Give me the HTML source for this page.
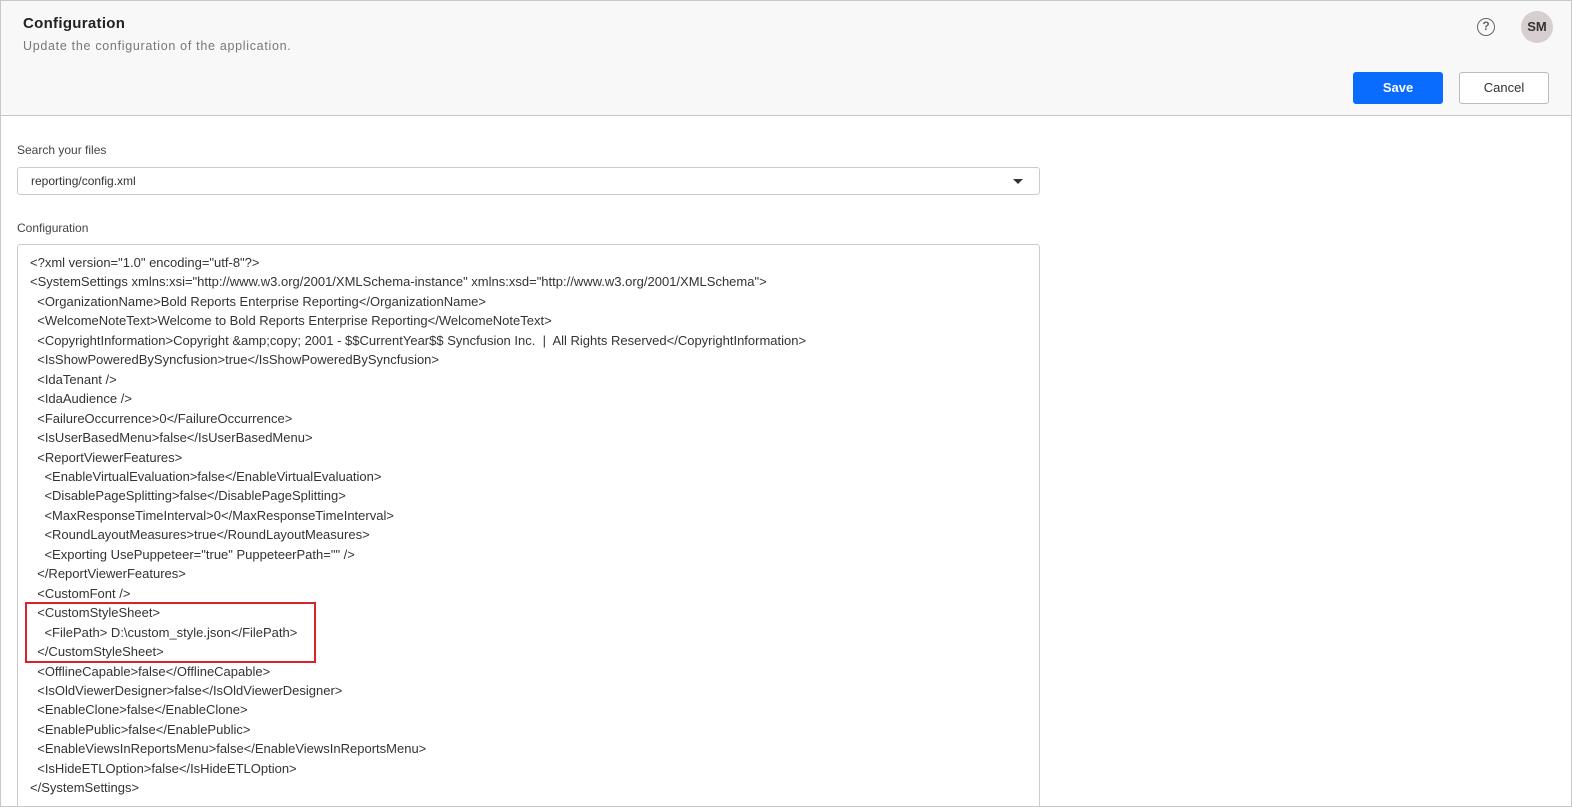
<!DOCTYPE html>
<html><head><meta charset="utf-8"><style>
*{box-sizing:border-box;margin:0;padding:0}
html{width:1572px;height:807px;overflow:hidden}
body{width:1572px;height:807px;overflow:hidden;background:#fff;font-family:"Liberation Sans",Arial,sans-serif;position:relative;border:1px solid #c8c8c8;}
.hdr{position:absolute;left:0;top:0;width:1570px;height:115px;background:#f8f8f8;border-bottom:1px solid #c8c8c8}
.t{position:absolute;left:22px;top:14px;font-size:15px;font-weight:bold;color:#222;letter-spacing:0.3px}
.st{position:absolute;left:22px;top:38px;font-size:12.5px;color:#777;letter-spacing:0.7px}
.help{position:absolute;left:1476px;top:17px;width:18px;height:18px;border:1.5px solid #666;border-radius:50%;font-size:12px;color:#666;text-align:center;line-height:15px;font-weight:bold}
.av{position:absolute;left:1520px;top:10px;width:32px;height:32px;border-radius:50%;background:#d7cfcf;color:#333;font-size:13px;font-weight:bold;text-align:center;line-height:32px}
.btn{position:absolute;top:71px;height:32px;border-radius:3px;font-size:13px;text-align:center;line-height:30px}
.save{left:1352px;width:90px;background:#0a6cff;color:#fff;font-weight:bold;border:1px solid #0a6cff}
.cancel{left:1458px;width:90px;background:#fff;color:#333;border:1px solid #bbb}
.lbl{position:absolute;left:16px;font-size:12px;color:#444}
.sel{position:absolute;left:16px;top:166px;width:1023px;height:28px;border:1px solid #ccc;border-radius:3px;font-size:12px;color:#333;padding:6px 13px}
.sel:after{content:"";position:absolute;right:16px;top:11px;border-left:5px solid transparent;border-right:5px solid transparent;border-top:5px solid #333}
.ta{position:absolute;left:16px;top:243px;width:1023px;height:600px;border:1px solid #ccc;border-radius:3px;padding:8px 0 0 12px;font-size:13px;color:#333;line-height:19.45px;white-space:pre;overflow:hidden}
.red{position:absolute;left:24px;top:601px;width:291px;height:61px;border:2px solid #d9232b}
</style></head><body>
<div class="hdr">
<div class="t">Configuration</div>
<div class="st">Update the configuration of the application.</div>
<div class="help">?</div>
<div class="av">SM</div>
<div class="btn save">Save</div>
<div class="btn cancel">Cancel</div>
</div>
<div class="lbl" style="top:142px">Search your files</div>
<div class="sel">reporting/config.xml</div>
<div class="lbl" style="top:220px">Configuration</div>
<div class="ta">&lt;?xml version="1.0" encoding="utf-8"?&gt;
&lt;SystemSettings xmlns:xsi="http://www.w3.org/2001/XMLSchema-instance" xmlns:xsd="http://www.w3.org/2001/XMLSchema"&gt;
  &lt;OrganizationName&gt;Bold Reports Enterprise Reporting&lt;/OrganizationName&gt;
  &lt;WelcomeNoteText&gt;Welcome to Bold Reports Enterprise Reporting&lt;/WelcomeNoteText&gt;
  &lt;CopyrightInformation&gt;Copyright &amp;amp;copy; 2001 - $$CurrentYear$$ Syncfusion Inc.  |  All Rights Reserved&lt;/CopyrightInformation&gt;
  &lt;IsShowPoweredBySyncfusion&gt;true&lt;/IsShowPoweredBySyncfusion&gt;
  &lt;IdaTenant /&gt;
  &lt;IdaAudience /&gt;
  &lt;FailureOccurrence&gt;0&lt;/FailureOccurrence&gt;
  &lt;IsUserBasedMenu&gt;false&lt;/IsUserBasedMenu&gt;
  &lt;ReportViewerFeatures&gt;
    &lt;EnableVirtualEvaluation&gt;false&lt;/EnableVirtualEvaluation&gt;
    &lt;DisablePageSplitting&gt;false&lt;/DisablePageSplitting&gt;
    &lt;MaxResponseTimeInterval&gt;0&lt;/MaxResponseTimeInterval&gt;
    &lt;RoundLayoutMeasures&gt;true&lt;/RoundLayoutMeasures&gt;
    &lt;Exporting UsePuppeteer="true" PuppeteerPath="" /&gt;
  &lt;/ReportViewerFeatures&gt;
  &lt;CustomFont /&gt;
  &lt;CustomStyleSheet&gt;
    &lt;FilePath&gt; D:\custom_style.json&lt;/FilePath&gt;
  &lt;/CustomStyleSheet&gt;
  &lt;OfflineCapable&gt;false&lt;/OfflineCapable&gt;
  &lt;IsOldViewerDesigner&gt;false&lt;/IsOldViewerDesigner&gt;
  &lt;EnableClone&gt;false&lt;/EnableClone&gt;
  &lt;EnablePublic&gt;false&lt;/EnablePublic&gt;
  &lt;EnableViewsInReportsMenu&gt;false&lt;/EnableViewsInReportsMenu&gt;
  &lt;IsHideETLOption&gt;false&lt;/IsHideETLOption&gt;
&lt;/SystemSettings&gt;</div>
<div class="red"></div>
</body></html>
